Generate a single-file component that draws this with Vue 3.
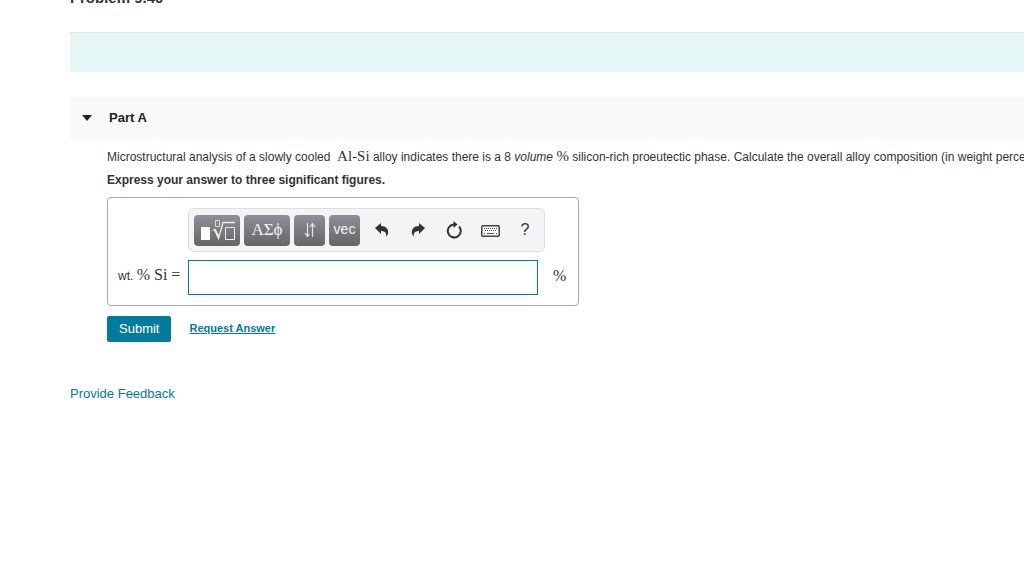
<script setup>
import { ref } from 'vue'

const answer = ref('')
const open = ref(true)
</script>

<template>
  <main class="page">
    <h1 class="title">Problem 9.40</h1>
    <div class="banner"></div>

    <section class="part">
      <h2 class="part-head">
        <button class="toggle" type="button" :aria-expanded="open" @click="open = !open">
          <svg class="caret" viewBox="0 0 10 6" aria-hidden="true"><path d="M0 0h10L5 6z" fill="#222" /></svg>
          <span>Part A</span>
        </button>
      </h2>

      <div v-if="open" class="part-body">
        <p class="question">
          Microstructural analysis of a slowly cooled&nbsp; <span class="math">Al-Si</span> alloy indicates there is a 8 <em>volume</em> <span class="math">%</span> silicon-rich proeutectic phase. Calculate the overall alloy composition (in weight percent).
        </p>
        <p class="instruction">Express your answer to three significant figures.</p>

        <form @submit.prevent>
          <div class="answer-box">
            <div class="toolbar" role="toolbar" aria-label="Equation tools">
              <button class="tool wide" type="button" aria-label="Templates">
                <svg width="36" height="24" viewBox="0 0 36 24" fill="none" aria-hidden="true">
                  <path d="M2 9h9v13H2z" fill="#fff" />
                  <path d="M16.500 2.500h4v6h-4z" stroke="#ddd" />
                  <path d="M14 12.500l2-1 3.500 9L24 4.500h12" stroke="#eee" stroke-width="1.300" />
                  <path d="M16 12l3.500 7" stroke="#eee" stroke-width="2" />
                  <path d="M26.500 9.500h9v12h-9z" stroke="#eee" />
                </svg>
              </button>
              <button class="tool wide greek" type="button">ΑΣϕ</button>
              <button class="tool" type="button" aria-label="Arrows">
                <svg width="12" height="16" viewBox="0 0 12 16" fill="none" stroke="#e4e4e4" stroke-width="1.200" aria-hidden="true">
                  <path d="M3.500 1v13M1 11l2.500 3.500L5.500 12M8.500 15V2M6 5l2.500-3.500L11 5" />
                </svg>
              </button>
              <button class="tool vec" type="button">vec</button>
              <div class="plains">
                <button class="plain" type="button" aria-label="Undo">
                  <svg width="14" height="14" viewBox="0 0 14 14" aria-hidden="true">
                    <path d="M0 5L6 0v3c5 0 8 3 7 8l-2 3c1-4-1-6-5-6v3z" fill="#333" />
                  </svg>
                </button>
                <button class="plain" type="button" aria-label="Redo">
                  <svg width="14" height="14" viewBox="0 0 14 14" aria-hidden="true">
                    <path d="M14 5L8 0v3C3 3 0 6 1 11l2 3c-1-4 1-6 5-6v3z" fill="#333" />
                  </svg>
                </button>
                <button class="plain" type="button" aria-label="Reset">
                  <svg width="16" height="18" viewBox="0 0 16 18" aria-hidden="true">
                    <path d="M9 3.500H8a6.500 6.500 0 1 0 5 2" fill="none" stroke="#333" stroke-width="2" />
                    <path d="M7.500 0l4 3.500-4 3.500z" fill="#333" />
                  </svg>
                </button>
                <button class="plain" type="button" aria-label="Keyboard">
                  <svg class="keys" width="19" height="12" viewBox="0 0 19 12" fill="none" aria-hidden="true">
                    <rect x=".75" y=".75" width="17.500" height="10.500" rx="1" stroke="#444" stroke-width="1.500" />
                    <path d="M3 3.500h13M4 5.500h12" stroke="#555" stroke-dasharray="1 1" />
                    <path d="M3 8.500h1M6 8.500h7M15 8.500h1" stroke="#555" />
                  </svg>
                </button>
                <button class="plain help" type="button" aria-label="Help">?</button>
              </div>
            </div>
            <label class="lhs" for="answer">wt. <span class="math">% Si =</span></label>
            <input id="answer" v-model="answer" class="field" type="text" autocomplete="off" />
            <span class="math unit">%</span>
          </div>

          <div class="actions">
            <button class="submit" type="submit">Submit</button>
            <a class="request" href="#request">Request Answer</a>
          </div>
        </form>
      </div>
    </section>

    <a class="feedback" href="#feedback">Provide Feedback</a>
  </main>
</template>

<style>
body {
  background: #fff;
  overflow: hidden;
}
</style>

<style scoped>
.page {
  margin-top: -13px;
  padding-left: 70px;
  overflow: hidden;
  color: #333;
  font: 12px/16px "Liberation Sans", Arial, sans-serif;
}
h1, h2, p {
  margin: 0;
}
button {
  padding: 0;
  border: 0;
  font: inherit;
  cursor: pointer;
}
.title {
  height: 45px;
  font-size: 15px;
  line-height: 22px;
}
.banner {
  box-sizing: border-box;
  height: 40px;
  border-top: 1px solid #dde5e5;
  background: #e5f6f6;
}
.part {
  margin-top: 25px;
}
.part-head {
  background: #f9f9f9;
}
.toggle {
  display: flex;
  align-items: center;
  gap: 17px;
  width: 100%;
  height: 42px;
  padding-left: 12px;
  background: none;
  color: #222;
  font-size: 13px;
  font-weight: bold;
}
.caret {
  width: 10px;
  height: 6px;
}
.part-body {
  padding: 5px 0 0 37px;
}
.question {
  line-height: 24px;
  white-space: nowrap;
}
.math {
  font-family: "Liberation Serif", "Times New Roman", serif;
  font-size: 15px;
}
.lhs .math,
.unit {
  font-size: 16px;
}
.instruction {
  line-height: 22px;
  font-weight: bold;
}
.answer-box {
  display: inline-grid;
  grid-template-columns: 70px 350px auto;
  align-items: center;
  row-gap: 8px;
  margin-top: 6px;
  padding: 10px;
  border: 1px solid #aaa;
  border-radius: 4px;
  vertical-align: top;
}
.toolbar {
  display: flex;
  grid-column: 2 / 4;
  justify-self: start;
  align-items: center;
  gap: 4px;
  box-sizing: border-box;
  height: 44px;
  padding: 0 2px 0 5px;
  border: 1px solid #ddd;
  border-radius: 6px;
  background: #f4f4f4;
}
.tool {
  display: grid;
  place-items: center;
  width: 31px;
  height: 31px;
  border-radius: 4px;
  background: linear-gradient(#908f98, #656565);
  color: #f4f4f4;
}
.wide {
  width: 46px;
}
.greek {
  font-family: "Liberation Serif", "Times New Roman", serif;
  font-size: 17px;
}
.vec {
  padding-bottom: 2px;
  font-size: 14px;
}
.plains {
  display: flex;
}
.plain {
  display: grid;
  place-items: center;
  width: 36px;
  height: 31px;
  background: none;
  color: #333;
}
.keys {
  margin-top: 2px;
}
.help {
  width: 34px;
  font-size: 16px;
}
.lhs {
  padding-bottom: 4px;
}
.field {
  box-sizing: border-box;
  width: 100%;
  height: 35px;
  padding: 0 8px;
  border: 1px solid #047a9c;
  background: #fff;
  font: inherit;
}
.unit {
  padding: 0 2px 4px 15px;
}
.actions {
  display: flex;
  align-items: center;
  gap: 18px;
  margin-top: 10px;
}
.submit {
  padding: 5px 12px;
  border-radius: 2px;
  background: #047a9c;
  color: #fff;
  font-size: 13px;
}
.request {
  padding-bottom: 2px;
  color: #047a9c;
  font-size: 11px;
  font-weight: bold;
}
.feedback {
  display: inline-block;
  margin-top: 44px;
  color: #047a9c;
  font-size: 13px;
  text-decoration: none;
}
</style>
